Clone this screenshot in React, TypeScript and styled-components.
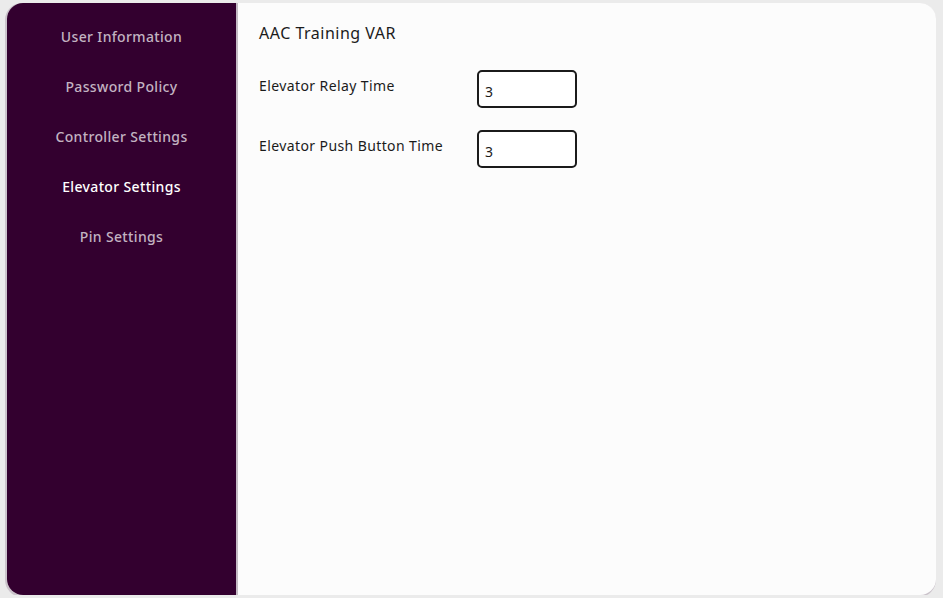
import React, { useState } from 'react';
import styled, { createGlobalStyle } from 'styled-components';

const GlobalStyle = createGlobalStyle`
  html, body {
    margin: 0;
    padding: 0;
    background: #ebebeb;
  }
  body {
    font-family: 'Noto Sans', 'Open Sans', sans-serif;
  }
`;

const SIDEBAR_WIDTH = 229;

const Root = styled.div`
  display: flex;
  margin: 3px 7px 0 7px;
  height: 592px;
  border-radius: 16px;
  overflow: hidden;
  background: #fcfcfc;
  box-shadow: -1px 1px 0 1px #cbc3cb;
`;

const Sidebar = styled.nav`
  width: ${SIDEBAR_WIDTH}px;
  flex-shrink: 0;
  background: #33002f;
  border-right: 2px solid #c3bac3;
  display: flex;
  flex-direction: column;
  padding-top: 21px;
  gap: 24px;
`;

interface NavItemProps {
  active: boolean;
}
const NavItem = styled.div<NavItemProps>`
  height: 26px;
  line-height: 26px;
  text-align: center;
  font-size: 14px;
  font-weight: 500;
  letter-spacing: 0.35px;
  color: ${(props) => (props.active ? '#ffffff' : '#c2b3c1')};
  cursor: pointer;
`;

const Content = styled.main`
  flex: 1;
  padding: 19px 21px;
  color: #1b1b1b;
`;

const Title = styled.h3`
  margin: 0 0 26px;
  font-size: 16px;
  font-weight: 400;
  letter-spacing: 0.5px;
  line-height: 22px;
`;

const Row = styled.div`
  display: flex;
  align-items: flex-start;
  margin-bottom: 22px;
`;

const Label = styled.label`
  width: 218px;
  font-size: 14px;
  letter-spacing: 0.4px;
  line-height: 20px;
  padding-top: 6px;
`;

const Input = styled.input`
  box-sizing: border-box;
  width: 100px;
  height: 38px;
  border: 2px solid #1b1b1b;
  border-radius: 5px;
  background: #ffffff;
  padding: 4px 6px 0;
  font-family: inherit;
  font-size: 14px;
  color: #1b1b1b;
  outline: none;
`;

const navItems = [
  'User Information',
  'Password Policy',
  'Controller Settings',
  'Elevator Settings',
  'Pin Settings',
];

const App: React.FC = () => {
  const [active, setActive] = useState('Elevator Settings');
  const [relay, setRelay] = useState('3');
  const [push, setPush] = useState('3');

  return (
    <>
      <GlobalStyle />
      <Root>
        <Sidebar>
          {navItems.map((item) => (
            <NavItem key={item} active={item === active} onClick={() => setActive(item)}>
              {item}
            </NavItem>
          ))}
        </Sidebar>
        <Content>
          <Title>AAC Training VAR</Title>
          <Row>
            <Label>Elevator Relay Time</Label>
            <Input value={relay} onChange={(e) => setRelay(e.target.value)} />
          </Row>
          <Row>
            <Label>Elevator Push Button Time</Label>
            <Input value={push} onChange={(e) => setPush(e.target.value)} />
          </Row>
        </Content>
      </Root>
    </>
  );
};

export default App;
